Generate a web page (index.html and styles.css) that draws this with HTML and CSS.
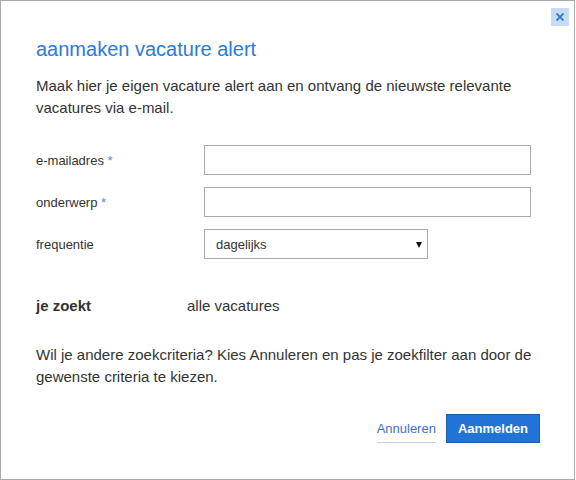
FILE: index.html
```html
<!DOCTYPE html>
<html lang="nl">
<head>
    <meta charset="UTF-8">
    <meta name="viewport" content="width=device-width, initial-scale=1.0">
    <title>Vacature alert aanmaken</title>
    <link rel="stylesheet" href="styles.css">
</head>
<body>

    <div class="dialog">
        <button class="close-btn" title="Sluiten">
            <svg width="8" height="8" viewBox="0 0 8 8"><path d="M0.5 0.5 L7.5 7.5 M7.5 0.5 L0.5 7.5" stroke="#2f73d6" stroke-width="1.8" fill="none"/></svg>
        </button>

        <h2 class="title">aanmaken vacature alert</h2>
        <p class="intro">Maak hier je eigen vacature alert aan en ontvang de nieuwste relevante vacatures via e-mail.</p>

        <div class="form">
            <div class="row">
                <label for="email">e-mailadres <span class="req">*</span></label>
                <input type="text" id="email">
            </div>
            <div class="row">
                <label for="subject">onderwerp <span class="req">*</span></label>
                <input type="text" id="subject">
            </div>
            <div class="row">
                <label for="freq">frequentie</label>
                <div class="select-wrap">
                    <select id="freq">
                        <option>dagelijks</option>
                        <option>wekelijks</option>
                    </select>
                </div>
            </div>
        </div>

        <div class="search">
            <strong>je zoekt</strong>
            <span>alle vacatures</span>
        </div>

        <p class="hint">Wil je andere zoekcriteria? Kies Annuleren en pas je zoekfilter aan door de gewenste criteria te kiezen.</p>

        <div class="actions">
            <a href="#" class="cancel">Annuleren</a>
            <button class="submit-btn">Aanmelden</button>
        </div>
    </div>

</body>
</html>
```

FILE: styles.css
```css
body {
    font-family: 'Liberation Sans', Arial, sans-serif;
    background-color: #fff;
    color: #333;
    margin: 0;
    padding: 0;
}

.dialog {
    position: relative;
    box-sizing: border-box;
    width: 575px;
    height: 480px;
    border: 1px solid #aaa;
    padding: 36px 34px 0 35px;
    background: white;
}

.close-btn {
    position: absolute;
    top: 7px;
    right: 5px;
    width: 18px;
    height: 18px;
    padding: 0;
    border: none;
    background: #c6dcf4;
    display: flex;
    align-items: center;
    justify-content: center;
    cursor: pointer;
}

.title {
    margin: 0;
    font-size: 20px;
    line-height: 24px;
    font-weight: normal;
    color: #2b7ad6;
}

.intro {
    margin: 14px 0 0;
    font-size: 15px;
    line-height: 22px;
}

.form {
    margin-top: 26px;
    display: flex;
    flex-direction: column;
    gap: 12px;
}

.row {
    display: flex;
    align-items: center;
}

.row label {
    width: 168px;
    font-size: 13px;
}

.req {
    color: #5b88cc;
}

input,
select {
    box-sizing: border-box;
    height: 30px;
    border: 1px solid #a9a9a9;
    border-radius: 0;
    font-family: inherit;
    font-size: 13px;
    color: #333;
    background: white;
}

input {
    width: 327px;
    padding: 0 10px;
}

.select-wrap {
    position: relative;
}

select {
    width: 224px;
    padding: 0 24px 0 11px;
    appearance: none;
    -webkit-appearance: none;
}

.select-wrap::after {
    content: "";
    position: absolute;
    top: 13px;
    left: 212px;
    border-left: 3px solid transparent;
    border-right: 3px solid transparent;
    border-top: 6px solid #111;
    pointer-events: none;
}

.search {
    margin-top: 36px;
    display: flex;
    font-size: 15px;
    line-height: 22px;
}

.search strong {
    width: 151px;
}

.hint {
    margin: 27px 0 0;
    font-size: 15px;
    line-height: 22px;
}

.actions {
    margin-top: 26px;
    display: flex;
    justify-content: flex-end;
    align-items: baseline;
    gap: 10px;
}

.cancel {
    display: inline-block;
    font-size: 13px;
    line-height: 16px;
    padding-bottom: 5px;
    color: #3f6fd2;
    text-decoration: none;
    border-bottom: 1px solid #c3d3ec;
}

.submit-btn {
    box-sizing: border-box;
    height: 29px;
    padding: 0 11px;
    background: #2273d8;
    border: 1px solid #1a5fb4;
    color: white;
    font-family: inherit;
    font-size: 13px;
    font-weight: bold;
    cursor: pointer;
}
```
